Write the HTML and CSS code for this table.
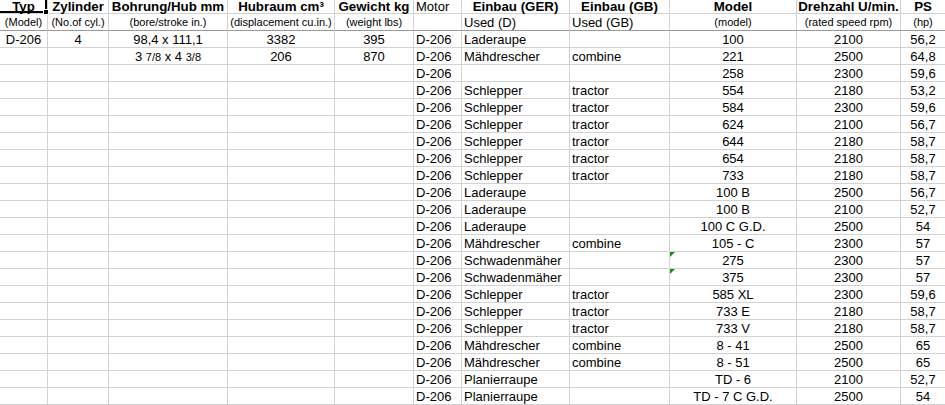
FILE: index.html
```html
<!DOCTYPE html>
<html>
<head>
<meta charset="utf-8">
<link rel="stylesheet" href="styles.css">
</head>
<body>
<div class="sheet">
  <div class="row head">
    <div class="c b sel"><u>Typ</u></div>
    <div class="c b">Zylinder</div>
    <div class="c b">Bohrung/Hub mm</div>
    <div class="c b">Hubraum cm³</div>
    <div class="c b">Gewicht kg</div>
    <div class="c l">Motor</div>
    <div class="c b">Einbau (GER)</div>
    <div class="c b">Einbau (GB)</div>
    <div class="c b">Model</div>
    <div class="c b">Drehzahl U/min.</div>
    <div class="c b">PS</div>
  </div>
  <div class="row sub">
    <div class="c s">(Model)</div>
    <div class="c s">(No.of cyl.)</div>
    <div class="c s">(bore/stroke in.)</div>
    <div class="c s">(displacement cu.in.)</div>
    <div class="c s">(weight lbs)</div>
    <div class="c"></div>
    <div class="c l">Used (D)</div>
    <div class="c l">Used (GB)</div>
    <div class="c s">(model)</div>
    <div class="c s">(rated speed rpm)</div>
    <div class="c s">(hp)</div>
  </div>
  <div class="row">
    <div class="c">D-206</div><div class="c">4</div><div class="c">98,4 x 111,1</div><div class="c">3382</div><div class="c">395</div>
    <div class="c l">D-206</div><div class="c l">Laderaupe</div><div class="c l"></div><div class="c">100</div><div class="c">2100</div><div class="c">56,2</div>
  </div>
  <div class="row">
    <div class="c"></div><div class="c"></div><div class="c">3 <span class="fr">7/8</span> x 4 <span class="fr">3/8</span></div><div class="c">206</div><div class="c">870</div>
    <div class="c l">D-206</div><div class="c l">Mähdrescher</div><div class="c l">combine</div><div class="c">221</div><div class="c">2500</div><div class="c">64,8</div>
  </div>
  <div class="row">
    <div class="c"></div><div class="c"></div><div class="c"></div><div class="c"></div><div class="c"></div>
    <div class="c l">D-206</div><div class="c l"></div><div class="c l"></div><div class="c">258</div><div class="c">2300</div><div class="c">59,6</div>
  </div>
  <div class="row">
    <div class="c"></div><div class="c"></div><div class="c"></div><div class="c"></div><div class="c"></div>
    <div class="c l">D-206</div><div class="c l">Schlepper</div><div class="c l">tractor</div><div class="c">554</div><div class="c">2180</div><div class="c">53,2</div>
  </div>
  <div class="row">
    <div class="c"></div><div class="c"></div><div class="c"></div><div class="c"></div><div class="c"></div>
    <div class="c l">D-206</div><div class="c l">Schlepper</div><div class="c l">tractor</div><div class="c">584</div><div class="c">2300</div><div class="c">59,6</div>
  </div>
  <div class="row">
    <div class="c"></div><div class="c"></div><div class="c"></div><div class="c"></div><div class="c"></div>
    <div class="c l">D-206</div><div class="c l">Schlepper</div><div class="c l">tractor</div><div class="c">624</div><div class="c">2100</div><div class="c">56,7</div>
  </div>
  <div class="row">
    <div class="c"></div><div class="c"></div><div class="c"></div><div class="c"></div><div class="c"></div>
    <div class="c l">D-206</div><div class="c l">Schlepper</div><div class="c l">tractor</div><div class="c">644</div><div class="c">2180</div><div class="c">58,7</div>
  </div>
  <div class="row">
    <div class="c"></div><div class="c"></div><div class="c"></div><div class="c"></div><div class="c"></div>
    <div class="c l">D-206</div><div class="c l">Schlepper</div><div class="c l">tractor</div><div class="c">654</div><div class="c">2180</div><div class="c">58,7</div>
  </div>
  <div class="row">
    <div class="c"></div><div class="c"></div><div class="c"></div><div class="c"></div><div class="c"></div>
    <div class="c l">D-206</div><div class="c l">Schlepper</div><div class="c l">tractor</div><div class="c">733</div><div class="c">2180</div><div class="c">58,7</div>
  </div>
  <div class="row">
    <div class="c"></div><div class="c"></div><div class="c"></div><div class="c"></div><div class="c"></div>
    <div class="c l">D-206</div><div class="c l">Laderaupe</div><div class="c l"></div><div class="c">100 B</div><div class="c">2500</div><div class="c">56,7</div>
  </div>
  <div class="row">
    <div class="c"></div><div class="c"></div><div class="c"></div><div class="c"></div><div class="c"></div>
    <div class="c l">D-206</div><div class="c l">Laderaupe</div><div class="c l"></div><div class="c">100 B</div><div class="c">2100</div><div class="c">52,7</div>
  </div>
  <div class="row">
    <div class="c"></div><div class="c"></div><div class="c"></div><div class="c"></div><div class="c"></div>
    <div class="c l">D-206</div><div class="c l">Laderaupe</div><div class="c l"></div><div class="c">100 C G.D.</div><div class="c">2500</div><div class="c">54</div>
  </div>
  <div class="row">
    <div class="c"></div><div class="c"></div><div class="c"></div><div class="c"></div><div class="c"></div>
    <div class="c l">D-206</div><div class="c l">Mähdrescher</div><div class="c l">combine</div><div class="c">105 - C</div><div class="c">2300</div><div class="c">57</div>
  </div>
  <div class="row">
    <div class="c"></div><div class="c"></div><div class="c"></div><div class="c"></div><div class="c"></div>
    <div class="c l">D-206</div><div class="c l">Schwadenmäher</div><div class="c l"></div><div class="c err">275</div><div class="c">2300</div><div class="c">57</div>
  </div>
  <div class="row">
    <div class="c"></div><div class="c"></div><div class="c"></div><div class="c"></div><div class="c"></div>
    <div class="c l">D-206</div><div class="c l">Schwadenmäher</div><div class="c l"></div><div class="c err">375</div><div class="c">2300</div><div class="c">57</div>
  </div>
  <div class="row">
    <div class="c"></div><div class="c"></div><div class="c"></div><div class="c"></div><div class="c"></div>
    <div class="c l">D-206</div><div class="c l">Schlepper</div><div class="c l">tractor</div><div class="c">585 XL</div><div class="c">2300</div><div class="c">59,6</div>
  </div>
  <div class="row">
    <div class="c"></div><div class="c"></div><div class="c"></div><div class="c"></div><div class="c"></div>
    <div class="c l">D-206</div><div class="c l">Schlepper</div><div class="c l">tractor</div><div class="c">733 E</div><div class="c">2180</div><div class="c">58,7</div>
  </div>
  <div class="row">
    <div class="c"></div><div class="c"></div><div class="c"></div><div class="c"></div><div class="c"></div>
    <div class="c l">D-206</div><div class="c l">Schlepper</div><div class="c l">tractor</div><div class="c">733 V</div><div class="c">2180</div><div class="c">58,7</div>
  </div>
  <div class="row">
    <div class="c"></div><div class="c"></div><div class="c"></div><div class="c"></div><div class="c"></div>
    <div class="c l">D-206</div><div class="c l">Mähdrescher</div><div class="c l">combine</div><div class="c">8 - 41</div><div class="c">2500</div><div class="c">65</div>
  </div>
  <div class="row">
    <div class="c"></div><div class="c"></div><div class="c"></div><div class="c"></div><div class="c"></div>
    <div class="c l">D-206</div><div class="c l">Mähdrescher</div><div class="c l">combine</div><div class="c">8 - 51</div><div class="c">2500</div><div class="c">65</div>
  </div>
  <div class="row">
    <div class="c"></div><div class="c"></div><div class="c"></div><div class="c"></div><div class="c"></div>
    <div class="c l">D-206</div><div class="c l">Planierraupe</div><div class="c l"></div><div class="c">TD - 6</div><div class="c">2100</div><div class="c">52,7</div>
  </div>
  <div class="row">
    <div class="c"></div><div class="c"></div><div class="c"></div><div class="c"></div><div class="c"></div>
    <div class="c l">D-206</div><div class="c l">Planierraupe</div><div class="c l"></div><div class="c">TD - 7 C G.D.</div><div class="c">2500</div><div class="c">54</div>
  </div>
</div>
</body>
</html>
```

FILE: styles.css
```css
html, body {
  margin: 0;
  padding: 0;
  background: #ffffff;
  overflow: hidden;
}

.sheet {
  margin-top: -1px;
  width: 946px;
  font-family: "Liberation Sans", Arial, sans-serif;
  font-size: 13px;
  color: #000;
}

.row {
  display: grid;
  grid-template-columns: 48px 61px 119px 107px 79px 48px 108px 100px 127px 104px 45px;
  height: 17px;
}

.c {
  box-sizing: border-box;
  height: 17px;
  border-right: 1px solid #d2d2d2;
  border-bottom: 1px solid #d2d2d2;
  text-align: center;
  line-height: 18px;
  white-space: nowrap;
  overflow: visible;
  position: relative;
}

.c.l {
  text-align: left;
  padding-left: 2px;
}

.c.b {
  font-weight: bold;
  font-size: 13.3px;
}

.row.head {
  height: 15px;
}

.head .c {
  height: 15px;
  line-height: 15px;
}

.sub .c {
  border-bottom-color: #9a9a9a;
}

.c.s {
  font-size: 11px;
  line-height: 17px;
}

.fr {
  font-size: 11px;
}

.sel::after {
  content: "";
  position: absolute;
  left: -2px;
  top: -2px;
  right: 0;
  bottom: 0;
  border-right: 2px solid #000;
  border-bottom: 2px solid #000;
}

.sel::before {
  content: "";
  position: absolute;
  right: -2px;
  bottom: -2px;
  width: 4px;
  height: 4px;
  background: #000;
  border: 1px solid #fff;
  z-index: 2;
}

.err::before {
  content: "";
  position: absolute;
  left: 0;
  top: 0;
  width: 0;
  height: 0;
  border-top: 5px solid #1a8a1a;
  border-right: 5px solid transparent;
}
```
